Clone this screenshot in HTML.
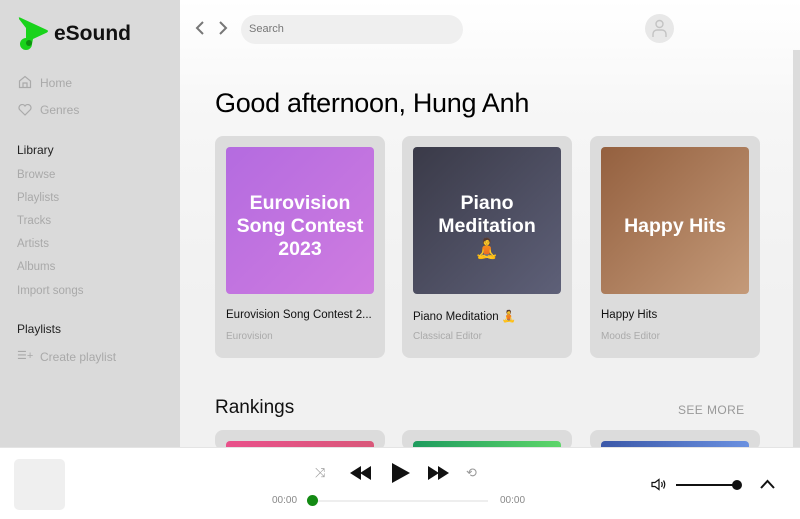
<!DOCTYPE html>
<html><head><style>
*{margin:0;padding:0;box-sizing:border-box}
body{width:800px;height:519px;overflow:hidden;font-family:"Liberation Sans",sans-serif;background:#f1f1f1;position:relative}
.side{position:absolute;left:0;top:0;width:180px;height:447px;background:#dadada}
.main{position:absolute;left:180px;top:0;width:620px;height:447px;background:linear-gradient(#fff 0,#f6f6f6 120px,#f1f1f1 300px)}
.t{position:absolute;white-space:nowrap}
.g{color:#a9a9a9;font-size:12px}
.card{position:absolute;top:136px;width:170px;height:222px;background:#dcdcdc;border-radius:8px}
.img{position:absolute;left:11px;top:11px;width:148px;height:147px;border-radius:4px;color:#fff;font-weight:bold;font-size:19.5px;text-align:center;display:flex;align-items:center;justify-content:center;line-height:23px;overflow:hidden;padding-top:12px}
.ct{position:absolute;left:11px;top:172px;font-size:11.5px;color:#111}
.cs{position:absolute;left:11px;top:195px;font-size:10px;color:#aaa}
.rc{position:absolute;top:430px;width:170px;height:20px;background:#dcdcdc;border-radius:8px}
.rc div{position:absolute;left:11px;top:11px;width:148px;height:10px;border-radius:4px 4px 0 0}
.bar{position:absolute;left:0;top:447px;width:800px;height:72px;background:#fff;border-top:1px solid #e4e4e4}
</style></head><body>
<div class="side">
<svg style="position:absolute;left:16px;top:16px" width="34" height="35" viewBox="0 0 34 35"><path d="M3 2 Q2 1 4 1.5 L31 14 Q33 15 31 16.5 L17 23 L16 28 A6 6 0 1 1 10 22 L10 12 L3 3Z" fill="#19d31b"/><circle cx="13" cy="27" r="3" fill="#0e8e10"/></svg>
<div class="t" style="left:54px;top:22px;font-size:21px;font-weight:bold;color:#111">eSound</div>
<svg style="position:absolute;left:18px;top:75px" width="14" height="14" viewBox="0 0 14 14" fill="none" stroke="#aaa" stroke-width="1.2"><path d="M1.5 6 L7 1.5 L12.5 6 V12.5 H1.5Z M5 12.5 V8 H9 V12.5"/></svg>
<div class="t g" style="left:40px;top:76px">Home</div>
<svg style="position:absolute;left:18px;top:104px" width="14" height="12" viewBox="0 0 14 12" fill="none" stroke="#aaa" stroke-width="1.2"><path d="M7 11 L1.5 5.5 A3 3 0 0 1 7 2 A3 3 0 0 1 12.5 5.5Z"/></svg>
<div class="t g" style="left:40px;top:103px">Genres</div>
<div class="t" style="left:17px;top:143px;font-size:12px;color:#222">Library</div>
<div class="t g" style="left:17px;top:169px;font-size:11.5px">Browse</div>
<div class="t g" style="left:17px;top:192px;font-size:11.5px">Playlists</div>
<div class="t g" style="left:17px;top:215px;font-size:11.5px">Tracks</div>
<div class="t g" style="left:17px;top:238px;font-size:11.5px">Artists</div>
<div class="t g" style="left:17px;top:261px;font-size:11.5px">Albums</div>
<div class="t g" style="left:17px;top:285px;font-size:11.5px">Import songs</div>
<div class="t" style="left:17px;top:322px;font-size:12px;color:#222">Playlists</div>
<div class="t g" style="left:17px;top:349px;font-size:11px">☰+</div>
<div class="t g" style="left:40px;top:350px">Create playlist</div>
</div>
<div class="main">
<svg style="position:absolute;left:15px;top:21px" width="10" height="14" viewBox="0 0 10 14" fill="none" stroke="#777" stroke-width="2"><path d="M8 1 L2 7 L8 13"/></svg>
<svg style="position:absolute;left:38px;top:21px" width="10" height="14" viewBox="0 0 10 14" fill="none" stroke="#777" stroke-width="2"><path d="M2 1 L8 7 L2 13"/></svg>
<div style="position:absolute;left:61px;top:15px;width:222px;height:29px;border-radius:15px;background:#efefef"></div>
<div class="t" style="left:69px;top:23px;font-size:11px;color:#777">Search</div>
<div style="position:absolute;left:465px;top:14px;width:29px;height:29px;border-radius:50%;background:#e8e8e8"></div>
<svg style="position:absolute;left:471px;top:19px" width="17" height="19" viewBox="0 0 17 19" fill="none" stroke="#c3c3c3" stroke-width="1.4"><circle cx="8.5" cy="5" r="3.5"/><path d="M2 18 V15 A4 4 0 0 1 6 11 H11 A4 4 0 0 1 15 15 V18"/></svg>
<div style="position:absolute;left:613px;top:50px;width:7px;height:397px;background:#dcdcdc"></div>
<div class="t" style="left:35px;top:88px;font-size:27px;color:#000;letter-spacing:-0.3px">Good afternoon, Hung Anh</div>
</div>
<div class="card" style="left:215px"><div class="img" style="background:linear-gradient(135deg,#b46be0,#cf7ce0)">Eurovision<br>Song Contest<br>2023</div><div class="ct" style="top:173px">Eurovision Song Contest 2...</div><div class="cs">Eurovision</div></div>
<div class="card" style="left:402px"><div class="img" style="background:linear-gradient(135deg,#3a3a48,#5e6078)">Piano<br>Meditation<br>🧘</div><div class="ct" style="top:173px">Piano Meditation 🧘</div><div class="cs">Classical Editor</div></div>
<div class="card" style="left:590px"><div class="img" style="background:linear-gradient(135deg,#94603f,#c49a79)">Happy Hits</div><div class="ct" style="top:173px">Happy Hits</div><div class="cs">Moods Editor</div></div>
<div class="t" style="left:215px;top:397px;font-size:19px;color:#111">Rankings</div>
<div class="t" style="left:678px;top:403px;font-size:12px;color:#999;letter-spacing:0.4px">SEE MORE</div>
<div class="rc" style="left:215px"><div style="background:linear-gradient(90deg,#e9508a,#d9587a)"></div></div>
<div class="rc" style="left:402px"><div style="background:linear-gradient(90deg,#1e9b5e,#5ed66a)"></div></div>
<div class="rc" style="left:590px"><div style="background:linear-gradient(90deg,#3b58a8,#6a90e0)"></div></div>
<div class="bar">
<div style="position:absolute;left:14px;top:11px;width:51px;height:51px;border-radius:5px;background:#efefef"></div>
<div class="t" style="left:315px;top:17px;font-size:13px;color:#999">⤨</div>
<svg style="position:absolute;left:350px;top:18px" width="22" height="14" viewBox="0 0 22 14"><path d="M11 0 L0 7 L11 14Z M21 0 L10 7 L21 14Z" fill="#111"/></svg>
<svg style="position:absolute;left:390px;top:14px" width="22" height="22" viewBox="0 0 22 22"><path d="M2 1 L20 11 L2 21Z" fill="#111"/></svg>
<svg style="position:absolute;left:428px;top:18px" width="22" height="14" viewBox="0 0 22 14"><path d="M0 0 L11 7 L0 14Z M10 0 L21 7 L10 14Z" fill="#111"/></svg>
<div class="t" style="left:466px;top:17px;font-size:13px;color:#999">⟲</div>
<div class="t" style="left:272px;top:47px;font-size:10px;color:#888">00:00</div>
<div style="position:absolute;left:310px;top:52px;width:178px;height:2px;background:#eee"></div>
<div style="position:absolute;left:307px;top:47px;width:11px;height:11px;border-radius:50%;background:#138a13"></div>
<div class="t" style="left:500px;top:47px;font-size:10px;color:#888">00:00</div>
<svg style="position:absolute;left:651px;top:30px" width="15" height="13" viewBox="0 0 15 13" fill="none" stroke="#111" stroke-width="1.2"><path d="M1 4.5 H4 L8 1.5 V11.5 L4 8.5 H1Z M10.5 4 Q12 6.5 10.5 9 M12.5 2.5 Q15 6.5 12.5 10.5"/></svg>
<div style="position:absolute;left:676px;top:36px;width:60px;height:2px;background:#111"></div>
<div style="position:absolute;left:732px;top:32px;width:10px;height:10px;border-radius:50%;background:#111"></div>
<svg style="position:absolute;left:760px;top:31px" width="15" height="10" viewBox="0 0 15 10" fill="none" stroke="#111" stroke-width="2"><path d="M1 9 L7.5 2 L14 9"/></svg>
</div>
</body></html>
